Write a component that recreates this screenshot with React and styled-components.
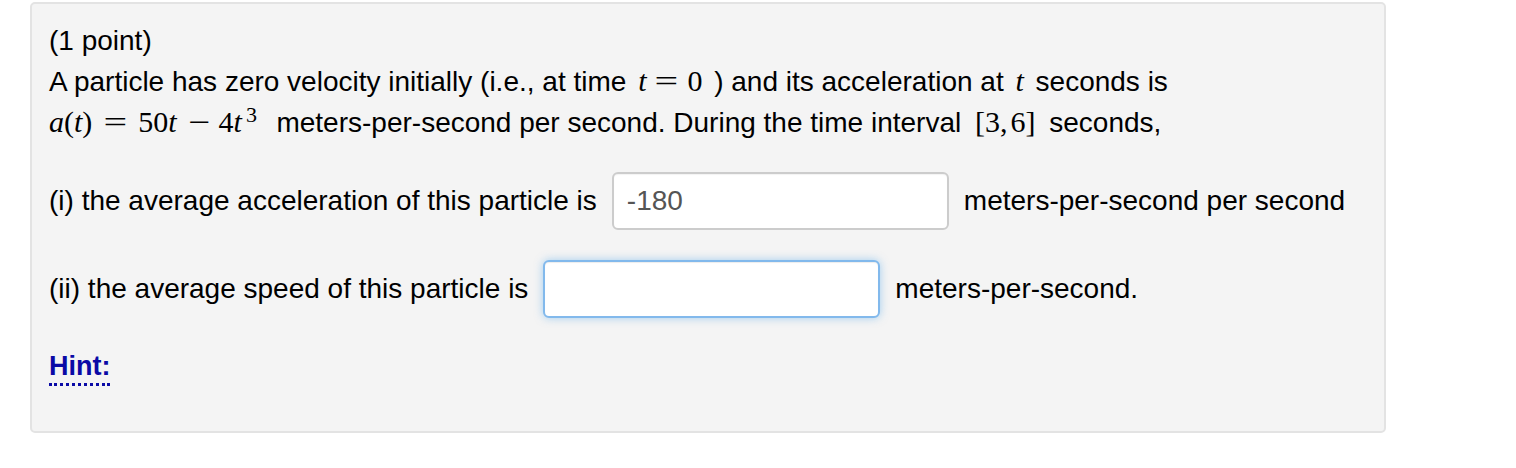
import React from "react";
import styled, { createGlobalStyle } from "styled-components";

const Global = createGlobalStyle`
  html, body { margin: 0; padding: 0; background: #ffffff; }
  body { font-family: "Liberation Sans", Arial, Helvetica, sans-serif; }
`;

const Page = styled.div`
  padding: 2px 0 0 30px;
`;

const Problem = styled.div`
  box-sizing: border-box;
  width: 1356px;
  height: 431px;
  background: #f4f4f4;
  border: 2px solid #e3e3e3;
  border-radius: 5px;
  padding: 17px 17px 0 17px;
  color: #000;
  font-size: 28px;
  line-height: 40px;
`;

const Para = styled.div`
  margin: 0;
  white-space: nowrap;
`;

const Math = styled.span`
  font-family: "Liberation Serif", "Times New Roman", serif;
  font-size: 30px;
  white-space: nowrap;
  margin: 0 ${(p) => p.$m ?? 4}px 0 ${(p) => (p.$tight ? 0 : p.$m ?? 4)}px;
`;

const V = styled.i`
  font-style: italic;
  margin-right: ${(p) => p.$kern || 0}px;
`;

const Op = styled.span`
  display: inline-block;
  transform: scaleX(${(p) => p.$sx || 1.4});
  margin: 0 ${(p) => p.$r}px 0 ${(p) => p.$l}px;
`;

const Thin = styled.span`
  margin-right: 3px;
`;

const Sup = styled.sup`
  font-size: 22px;
  line-height: 0;
  vertical-align: 0.45em;
  margin-left: 4px;
`;

const Row = styled.div`
  display: flex;
  align-items: center;
  gap: 15px;
  margin-top: ${(p) => p.$top}px;
  height: 58px;
  white-space: nowrap;
`;

const Answer = styled.div`
  box-sizing: border-box;
  width: 337px;
  height: 58px;
  flex: none;
  background: #fff;
  border: 2px solid ${(p) => (p.$focused ? "#82b9ec" : "#cccccc")};
  border-radius: 6px;
  box-shadow: ${(p) =>
    p.$focused
      ? "inset 0 1px 1px rgba(0,0,0,.075), 0 0 8px rgba(82,168,236,.5)"
      : "inset 0 1px 1px rgba(0,0,0,.05)"};
  padding: 0 13px;
  display: flex;
  align-items: center;
  color: #555;
  font-size: 28px;
`;

const Hint = styled.span`
  display: inline-block;
  margin-top: 31px;
  font-weight: bold;
  color: #0a0aa6;
  font-size: 27px;
  line-height: 34px;
  border-bottom: 3px dotted #0a0aa6;
`;

export default function App() {
  return (
    <>
      <Global />
      <Page>
        <Problem>
          <Para>(1 point)</Para>
          <Para>
            A particle has zero velocity initially (i.e., at time{" "}
            <Math>
              <V $kern={3}>t</V>
              <Op $l={9} $r={12}>=</Op>0
            </Math>{" "}
            ) and its acceleration at{" "}
            <Math>
              <V>t</V>
            </Math>{" "}
            seconds is
          </Para>
          <Para>
            <Math $tight>
              <V>a</V>(<V>t</V>)<Op $l={15} $r={14}>=</Op>50<V $kern={2}>t</V>
              <Op $l={12} $r={11} $sx={1.3}>−</Op>4<V>t</V>
              <Sup>3</Sup>
            </Math>{" "}
            {"\u00a0"}meters-per-second per second. During the time interval{" "}
            <Math $m={6}>
              [3,<Thin />6]
            </Math>{" "}
            seconds,
          </Para>
          <Row $top={29}>
            <span>(i) the average acceleration of this particle is</span>
            <Answer>-180</Answer>
            <span>meters-per-second per second</span>
          </Row>
          <Row $top={30}>
            <span>(ii) the average speed of this particle is</span>
            <Answer $focused />
            <span>meters-per-second.</span>
          </Row>
          <Hint>Hint:</Hint>
        </Problem>
      </Page>
    </>
  );
}
